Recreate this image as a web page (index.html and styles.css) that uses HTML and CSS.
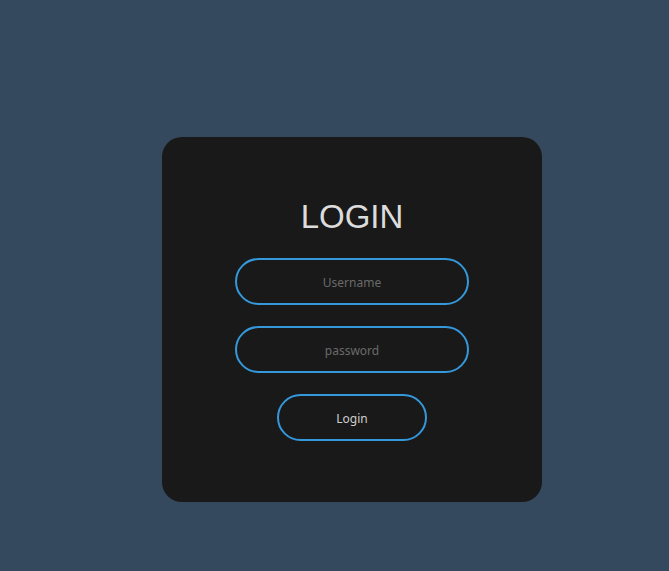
FILE: index.html
```html
<!DOCTYPE html>
<html lang="en">
<head>
    <meta charset="UTF-8">
    <meta name="viewport" content="width=device-width, initial-scale=1.0">
    <title>Login</title>
    <link rel="stylesheet" href="styles.css">
</head>
<body>
    <form class="box" onsubmit="return false">
        <h1>Login</h1>
        <input type="text" name="username" placeholder="Username">
        <input type="password" name="password" placeholder="password">
        <input type="submit" value="Login">
    </form>
</body>
</html>
```

FILE: styles.css
```css
* {
    margin: 0;
    padding: 0;
    box-sizing: border-box;
}

body {
    font-family: 'Liberation Sans', Arial, sans-serif;
    background: #34495e;
    min-height: 100vh;
    padding: 137px 0 0 162px;
}

.box {
    width: 380px;
    height: 365px;
    padding-top: 60px;
    background: #191919;
    border-radius: 20px;
    display: flex;
    flex-direction: column;
    align-items: center;
}

.box h1 {
    color: #dcdcdc;
    font-size: 33px;
    font-weight: normal;
    text-transform: uppercase;
    line-height: 39px;
    margin-bottom: 22px;
}

.box input {
    display: block;
    height: 47px;
    padding-top: 2px;
    background: none;
    border: 2px solid #3498db;
    border-radius: 24px;
    outline: none;
    text-align: center;
    font-family: 'Noto Sans', 'Open Sans', sans-serif;
    font-size: 12px;
    color: #ccc;
}

.box input::placeholder {
    color: #6a6a6a;
}

.box input[type="text"],
.box input[type="password"] {
    width: 234px;
    margin-bottom: 21px;
}

.box input[type="submit"] {
    width: 150px;
    color: #cfcfcf;
    cursor: pointer;
}

.box input[type="submit"]:hover {
    background: #3498db;
}
```
